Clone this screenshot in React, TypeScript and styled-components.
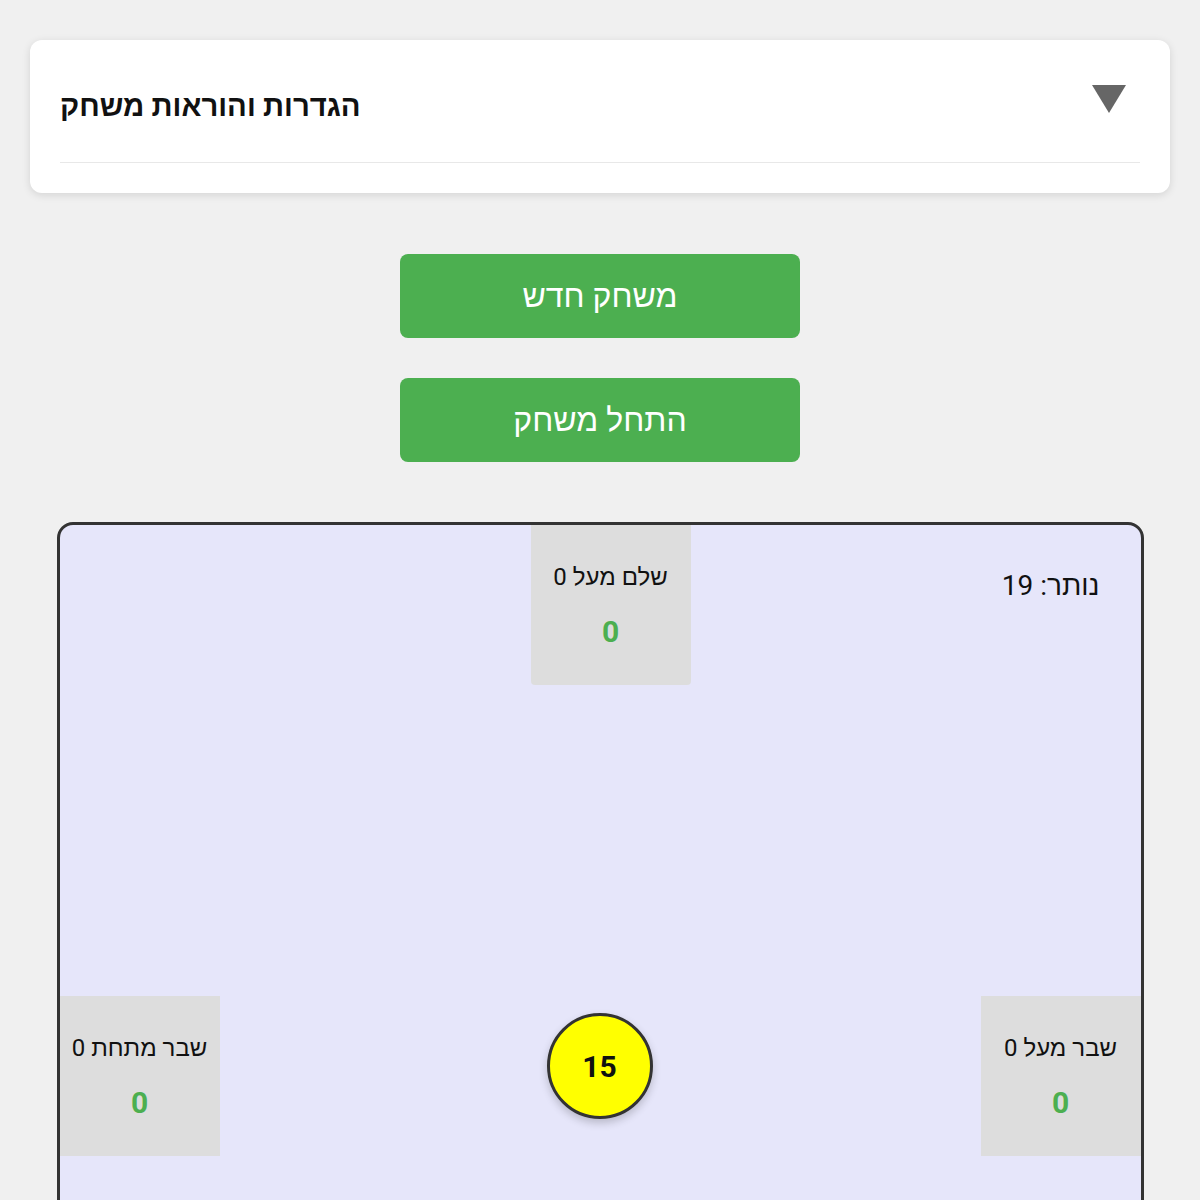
import React from 'react';
import styled, { createGlobalStyle } from 'styled-components';

const GlobalStyle = createGlobalStyle`
  html, body {
    margin: 0;
    padding: 0;
    background: #f0f0f0;
    font-family: Roboto, 'Liberation Sans', Arial, sans-serif;
  }
`;

const Page = styled.div`
  padding: 40px 30px;
  display: flex;
  flex-direction: column;
  align-items: center;
`;

const SettingsCard = styled.div`
  width: 100%;
  box-sizing: border-box;
  background: #ffffff;
  border-radius: 12px;
  padding: 30px;
  box-shadow: 0 2px 8px rgba(0, 0, 0, 0.12);
`;

const SettingsHeader = styled.div`
  display: flex;
  justify-content: space-between;
  align-items: center;
  height: 72px;
  padding-bottom: 20px;
  border-bottom: 1px solid #e8e8e8;
`;

const SettingsTitle = styled.h2`
  margin: 0;
  font-size: 29.3px;
  font-weight: 700;
  color: #111;
`;

const Arrow = styled.span`
  width: 0;
  height: 0;
  border-left: 17px solid transparent;
  border-right: 17px solid transparent;
  border-top: 28px solid #666;
  margin-right: 14px;
  margin-top: -14px;
`;

const Buttons = styled.div`
  display: flex;
  flex-direction: column;
  gap: 40px;
  margin: 61px 0 60px;
`;

const GreenButton = styled.button`
  width: 400px;
  height: 84px;
  border: none;
  border-radius: 8px;
  background: #4caf50;
  color: #ffffff;
  font-family: inherit;
  font-size: 32px;
  cursor: pointer;
`;

const GameArea = styled.div`
  position: relative;
  width: 1087px;
  height: 720px;
  box-sizing: border-box;
  border: 3px solid #333;
  border-radius: 16px;
  background: #e6e6fa;
  flex-shrink: 0;
`;

const Remaining = styled.div`
  position: absolute;
  top: 45px;
  right: 41px;
  font-size: 28px;
  line-height: 32px;
  color: #111;
`;

const Zone = styled.div<{ $top?: number; $left?: number; $right?: number; $radius: string }>`
  position: absolute;
  top: ${p => (p.$top !== undefined ? `${p.$top}px` : 'auto')};
  left: ${p => (p.$left !== undefined ? `${p.$left}px` : 'auto')};
  right: ${p => (p.$right !== undefined ? `${p.$right}px` : 'auto')};
  width: 160px;
  height: 160px;
  box-sizing: border-box;
  padding-top: 3px;
  background: #dddddd;
  border-radius: ${p => p.$radius};
  display: flex;
  flex-direction: column;
  align-items: center;
  justify-content: center;
  gap: 23px;
`;

const ZoneLabel = styled.div`
  font-size: 24px;
  line-height: 28px;
  color: #111;
`;

const ZoneCount = styled.div`
  font-size: 30px;
  line-height: 36px;
  font-weight: 700;
  color: #4caf50;
`;

const Ball = styled.div`
  position: absolute;
  left: 487px;
  top: 488px;
  width: 100px;
  height: 100px;
  border: 3px solid #333;
  border-radius: 50%;
  background: #ffff00;
  box-shadow: 0 4px 8px rgba(0, 0, 0, 0.2);
  display: flex;
  align-items: center;
  justify-content: center;
  font-size: 30px;
  font-weight: 700;
  color: #111;
`;

const zones = [
  { key: 'top', label: 'שלם מעל 0', top: 0, left: 471, radius: '0 0 4px 4px' },
  { key: 'left', label: 'שבר מתחת 0', top: 471, left: 0, radius: '0' },
  { key: 'right', label: 'שבר מעל 0', top: 471, right: 0, radius: '0' },
];

export default function App() {
  return (
    <>
      <GlobalStyle />
      <Page>
        <SettingsCard>
          <SettingsHeader>
            <SettingsTitle>הגדרות והוראות משחק</SettingsTitle>
            <Arrow />
          </SettingsHeader>
        </SettingsCard>

        <Buttons>
          <GreenButton>משחק חדש</GreenButton>
          <GreenButton>התחל משחק</GreenButton>
        </Buttons>

        <GameArea>
          <Remaining>נותר: 19</Remaining>
          {zones.map(z => (
            <Zone key={z.key} $top={z.top} $left={z.left} $right={z.right} $radius={z.radius}>
              <ZoneLabel>{z.label}</ZoneLabel>
              <ZoneCount>0</ZoneCount>
            </Zone>
          ))}
          <Ball>15</Ball>
        </GameArea>
      </Page>
    </>
  );
}
